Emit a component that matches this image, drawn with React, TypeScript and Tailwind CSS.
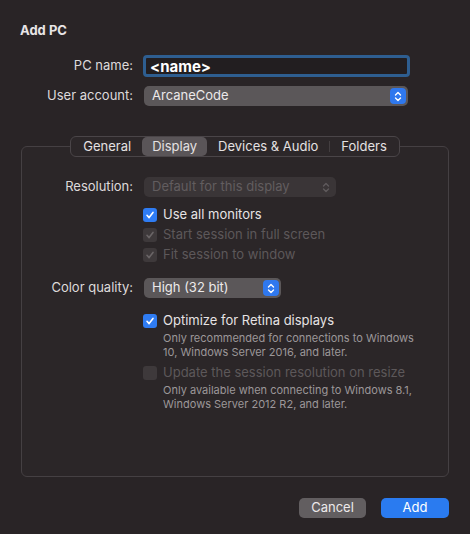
import React from 'react';

const Stepper = ({ disabled }: { disabled?: boolean }) => (
  <div
    className={
      disabled
        ? 'w-[16px] h-[16px] flex items-center justify-center'
        : 'w-[16px] h-[16px] rounded-[4px] bg-[#2f78ee] flex items-center justify-center'
    }
  >
    <svg width="8" height="11" viewBox="0 0 8 11" fill="none">
      <path
        d="M1.5 4 L4 1.5 L6.5 4 M1.5 7 L4 9.5 L6.5 7"
        stroke={disabled ? '#5f5a5c' : '#ffffff'}
        strokeWidth="1.4"
        strokeLinecap="round"
        strokeLinejoin="round"
      />
    </svg>
  </div>
);

const Check = ({ checked, disabled }: { checked: boolean; disabled?: boolean }) => {
  const bg = disabled ? 'bg-[#3e393b]' : checked ? 'bg-[#2f7cf3]' : 'bg-[#4a4547]';
  return (
    <div className={`w-[14px] h-[14px] rounded-[3px] ${bg} flex items-center justify-center shrink-0`}>
      {checked && (
        <svg width="10" height="10" viewBox="0 0 10 10" fill="none">
          <path
            d="M2 5.3 L4.1 7.6 L8 2.4"
            stroke={disabled ? '#6a6567' : '#ffffff'}
            strokeWidth="1.6"
            strokeLinecap="round"
            strokeLinejoin="round"
          />
        </svg>
      )}
    </div>
  );
};

const CheckRow = ({
  label,
  checked,
  disabled,
  className = '',
}: {
  label: string;
  checked: boolean;
  disabled?: boolean;
  className?: string;
}) => (
  <div className={`flex items-center h-[20px] pl-[121px] ${className}`}>
    <Check checked={checked} disabled={disabled} />
    <span className={`ml-[6px] text-[13px] ${disabled ? 'text-[#5d585a]' : 'text-[#e6e3e4]'}`}>{label}</span>
  </div>
);

const tabs = ['General', 'Display', 'Devices & Audio', 'Folders'];

export default function App() {
  return (
    <div
      className="w-[470px] h-[534px] bg-[#292426] text-[#dedadb] flex flex-col overflow-hidden"
      style={{ fontFamily: 'Inter, "Noto Sans", sans-serif' }}
    >
      <div className="pt-[22px] pl-[20px] text-[13px] leading-[16px] font-bold text-[#e8e5e6]">Add PC</div>

      {/* top form */}
      <div className="mt-[17px] flex items-center">
        <div className="w-[133px] text-right text-[13px]">PC name:</div>
        <div className="ml-[10px] w-[267px] h-[22px] rounded-[4px] border-[3px] border-[#2e5e90] bg-[#221e20] flex items-center pl-[4px]">
          <span className="text-[15px] font-bold text-white leading-none">&lt;name&gt;</span>
        </div>
      </div>
      <div className="mt-[9px] flex items-center">
        <div className="w-[133px] text-right text-[13px]">User account:</div>
        <div className="ml-[11px] w-[264px] h-[20px] rounded-[5px] bg-[#5b5759] flex items-center justify-between pl-[8px] pr-[2px]">
          <span className="text-[13px] text-[#ece9ea]">ArcaneCode</span>
          <Stepper />
        </div>
      </div>

      {/* group box */}
      <div className="mt-[40px] mx-[21px] h-[331px] border border-[#454043] rounded-[6px] bg-[#2b2628] flex flex-col">
        <div className="-mt-[11px] flex justify-center">
          <div className="flex items-center h-[21px] rounded-[6px] border border-[#4a4548] bg-[#2c2729] px-[1px] text-[13px] text-[#e4e1e2]">
            {tabs.map((t, i) => (
              <React.Fragment key={t}>
                {i === 3 && <div className="w-px h-[11px] bg-[#433e40]" />}
                <div
                  className={`h-[19px] flex items-center rounded-[5px] ${
                    t === 'Display' ? 'bg-[#5a5558] px-[10px]' : 'px-[11px]'
                  }`}
                >
                  {t}
                </div>
              </React.Fragment>
            ))}
          </div>
        </div>

        <div className="mt-[20px] flex items-center">
          <div className="w-[111px] text-right text-[13px]">Resolution:</div>
          <div className="ml-[11px] w-[192px] h-[20px] rounded-[5px] bg-[#3a3537] flex items-center justify-between pl-[8px] pr-[2px]">
            <span className="text-[13px] text-[#625d5f]">Default for this display</span>
            <Stepper disabled />
          </div>
        </div>

        <CheckRow className="mt-[8px]" label="Use all monitors" checked />
        <CheckRow label="Start session in full screen" checked disabled />
        <CheckRow label="Fit session to window" checked disabled />

        <div className="mt-[13px] flex items-center">
          <div className="w-[111px] text-right text-[13px]">Color quality:</div>
          <div className="ml-[11px] w-[137px] h-[20px] rounded-[5px] bg-[#5b5759] flex items-center justify-between pl-[8px] pr-[2px]">
            <span className="text-[13px] text-[#ece9ea]">High (32 bit)</span>
            <Stepper />
          </div>
        </div>

        <CheckRow className="mt-[13px]" label="Optimize for Retina displays" checked />
        <div className="pl-[141px] text-[11px] leading-[14px] text-[#9c9799]">
          Only recommended for connections to Windows
          <br />
          10, Windows Server 2016, and later.
        </div>

        <CheckRow className="mt-[4px]" label="Update the session resolution on resize" checked={false} disabled />
        <div className="pl-[141px] text-[11px] leading-[14px] text-[#9c9799]">
          Only available when connecting to Windows 8.1,
          <br />
          Windows Server 2012 R2, and later.
        </div>
      </div>

      {/* buttons */}
      <div className="mt-[21px] flex justify-end gap-[15px] pr-[21px]">
        <button className="w-[67px] h-[20px] rounded-[5px] bg-[#625e60] text-[13px] text-[#ece9ea] flex items-center justify-center">
          Cancel
        </button>
        <button className="w-[68px] h-[20px] rounded-[5px] bg-[#2a7bf0] text-[13px] text-white flex items-center justify-center">
          Add
        </button>
      </div>
    </div>
  );
}
